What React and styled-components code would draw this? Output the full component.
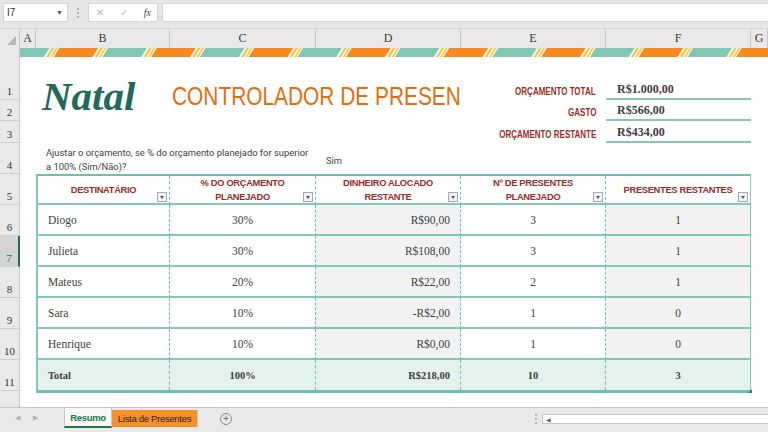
import React from "react";
import styled, { createGlobalStyle } from "styled-components";

const GlobalStyle = createGlobalStyle`
  html, body { margin: 0; padding: 0; }
  body {
    width: 768px;
    height: 432px;
    overflow: hidden;
    background: #e6e6e6;
    font-family: "Liberation Sans", Arial, sans-serif;
  }
`;

const TEAL = "#82c9b7";
const TEAL_DARK = "#6fbfaa";
const RED = "#9b2d1f";
const INK = "#404040";
const SERIF = `"Liberation Serif", "Times New Roman", serif`;

const COLS = [
  { key: "A", w: 16 },
  { key: "B", w: 134 },
  { key: "C", w: 146 },
  { key: "D", w: 145 },
  { key: "E", w: 145 },
  { key: "F", w: 145 },
  { key: "G", w: 17 },
];

const ROWS = [
  { n: 1, h: 52 },
  { n: 2, h: 21 },
  { n: 3, h: 22 },
  { n: 4, h: 31 },
  { n: 5, h: 31 },
  { n: 6, h: 31 },
  { n: 7, h: 31, selected: true },
  { n: 8, h: 31 },
  { n: 9, h: 31 },
  { n: 10, h: 31 },
  { n: 11, h: 31 },
];

const PEOPLE = [
  ["Diogo", "30%", "R$90,00", "3", "1"],
  ["Julieta", "30%", "R$108,00", "3", "1"],
  ["Mateus", "20%", "R$22,00", "2", "1"],
  ["Sara", "10%", "-R$2,00", "1", "0"],
  ["Henrique", "10%", "R$0,00", "1", "0"],
];

const TOTAL = ["Total", "100%", "R$218,00", "10", "3"];

const HEADERS = [
  "DESTINATÁRIO",
  "% DO ORÇAMENTO\nPLANEJADO",
  "DINHEIRO ALOCADO\nRESTANTE",
  "Nº DE PRESENTES\nPLANEJADO",
  "PRESENTES RESTANTES",
];

// column alignment / shading for the table body
const BODY_COLS = [
  { align: "left", shade: false },
  { align: "center", shade: false },
  { align: "right", shade: true },
  { align: "center", shade: false },
  { align: "center", shade: true },
];

const SUMMARY = [
  { label: "ORÇAMENTO TOTAL", value: "R$1.000,00" },
  { label: "GASTO", value: "R$566,00" },
  { label: "ORÇAMENTO RESTANTE", value: "R$434,00" },
];

/* ---------- formula bar ---------- */

const Page = styled.div`
  width: 768px;
  height: 432px;
  display: flex;
  flex-direction: column;
  background: #e6e6e6;
  overflow: hidden;
`;

const FormulaBar = styled.div`
  height: 28px;
  flex-shrink: 0;
  display: flex;
  align-items: center;
  padding: 0 0 3px 3px;
  box-sizing: border-box;
`;

const NameBox = styled.div`
  width: 65px;
  height: 19px;
  box-sizing: border-box;
  background: #fff;
  border: 1px solid #d6d6d6;
  display: flex;
  align-items: center;
  justify-content: space-between;
  padding: 0 4px 0 3px;
  font-size: 10px;
  color: #333;
`;

const Caret = styled.span`
  font-size: 7px;
  color: #555;
`;

const Grip = styled.div`
  width: 20px;
  display: flex;
  flex-direction: column;
  align-items: center;
  gap: 2px;

  span {
    width: 2px;
    height: 2px;
    background: #b4b4b4;
  }
`;

const FxBox = styled.div`
  width: 70px;
  height: 19px;
  box-sizing: border-box;
  background: #fff;
  border: 1px solid #d6d6d6;
  display: flex;
  align-items: center;
  padding: 0 6px 0 7px;
  justify-content: space-between;
`;

const FxIcon = styled.span`
  font-family: ${SERIF};
  font-style: ${(p) => (p.$dim ? "normal" : "italic")};
  font-size: 10px;
  color: ${(p) => (p.$dim ? "#b8b8b8" : "#444")};
`;

const FormulaInput = styled.div`
  flex: 1;
  height: 19px;
  margin-left: 4px;
  box-sizing: border-box;
  background: #fff;
  border: 1px solid #d6d6d6;
  border-right: none;
`;

/* ---------- grid headers ---------- */

const ColHeaderRow = styled.div`
  height: 20px;
  flex-shrink: 0;
  display: flex;
  background: #e9e9e9;
  border-top: 1px solid #d8d8d8;
  box-sizing: border-box;
`;

const Corner = styled.div`
  width: 20px;
  box-sizing: border-box;
  border-right: 1px solid #c8c8c8;
  display: flex;
  align-items: flex-end;
  justify-content: flex-end;
  padding: 0 3px 3px 0;

  &::after {
    content: "";
    width: 0;
    height: 0;
    border-left: 9px solid transparent;
    border-bottom: 9px solid #b9b9b9;
  }
`;

const ColHead = styled.div`
  width: ${(p) => p.$w}px;
  flex-shrink: 0;
  box-sizing: border-box;
  border-right: 1px solid #c8c8c8;
  display: flex;
  align-items: center;
  justify-content: center;
  font-family: ${SERIF};
  font-size: 12px;
  color: #3a3a3a;
`;

const SheetBody = styled.div`
  flex: 1;
  display: flex;
  min-height: 0;
`;

const RowHeaders = styled.div`
  width: 20px;
  flex-shrink: 0;
  display: flex;
  flex-direction: column;
  background: #e9e9e9;
`;

const RowHead = styled.div`
  height: ${(p) => p.$h}px;
  flex-shrink: 0;
  box-sizing: border-box;
  border-bottom: 1px solid #cfcfcf;
  border-right: ${(p) => (p.$selected ? "2px solid #217346" : "1px solid #c8c8c8")};
  background: ${(p) => (p.$selected ? "#d4d4d4" : "#e9e9e9")};
  color: ${(p) => (p.$selected ? "#217346" : "#333")};
  display: flex;
  align-items: flex-end;
  justify-content: center;
  padding-bottom: 2px;
  font-family: ${SERIF};
  font-size: 11px;
  line-height: 12px;
`;

const RowFiller = styled.div`
  flex: 1;
  border-right: 1px solid #c8c8c8;
`;

const Canvas = styled.div`
  flex: 1;
  background: #fff;
  display: flex;
  flex-direction: column;
  overflow: hidden;
`;

/* ---------- decorative band ---------- */

const BandSvg = styled.svg`
  display: block;
  flex-shrink: 0;
`;

const Band = () => (
  <BandSvg width="748" height="9">
    <defs>
      <pattern
        id="xmasStripe"
        width="97.5"
        height="9"
        patternUnits="userSpaceOnUse"
        patternTransform="translate(-9.5 0) skewX(-32)"
      >
        <rect x="0" y="0" width="97.5" height="9" fill="#ffffff" />
        <rect x="0" y="0" width="39" height="9" fill="#80c7b4" />
        <rect x="41.2" y="0" width="2.4" height="9" fill="#f6bd2c" />
        <rect x="45.4" y="0" width="1.8" height="9" fill="#f6bd2c" />
        <rect x="48.75" y="0" width="39" height="9" fill="#f7891f" />
        <rect x="90" y="0" width="2.4" height="9" fill="#f6bd2c" />
        <rect x="94.2" y="0" width="1.8" height="9" fill="#f6bd2c" />
      </pattern>
    </defs>
    <rect x="0" y="0" width="748" height="9" fill="url(#xmasStripe)" />
  </BandSvg>
);

/* ---------- top section ---------- */

const TopGrid = styled.div`
  display: grid;
  grid-template-columns: 16px 134px 146px 145px 145px 145px 1fr;
  grid-template-rows: 43px 21px 22px 31px;
  flex-shrink: 0;
`;

const Brand = styled.div`
  grid-column: 2;
  grid-row: 1 / 3;
  align-self: start;
  margin-top: 19px;
  padding-left: 6px;
  font-family: ${SERIF};
  font-style: italic;
  font-weight: 700;
  font-size: 41px;
  line-height: 41px;
  color: #22695a;
  white-space: nowrap;
`;

const TitleCell = styled.div`
  grid-column: 3 / 5;
  grid-row: 1 / 3;
  overflow: hidden;
  padding-top: 27px;
  padding-left: 2px;
`;

const Title = styled.div`
  display: inline-block;
  white-space: nowrap;
  font-size: 25px;
  line-height: 25px;
  color: #e66d0c;
  transform: scaleX(0.835);
  transform-origin: left center;
`;

const SummaryLabel = styled.div`
  grid-column: 5;
  grid-row: ${(p) => p.$row};
  display: flex;
  align-items: flex-end;
  justify-content: flex-end;
  padding: 0 10px 3px 0;
  white-space: nowrap;
`;

const LabelText = styled.span`
  display: inline-block;
  font-size: 10px;
  font-weight: 700;
  color: ${RED};
  transform: scaleX(0.8);
  transform-origin: right center;
`;

const SummaryValue = styled.div`
  grid-column: 6;
  grid-row: ${(p) => p.$row};
  display: flex;
  align-items: flex-end;
  padding: 0 0 2px 11px;
  border-bottom: 2px solid ${TEAL};
  font-family: ${SERIF};
  font-weight: 700;
  font-size: 12px;
  line-height: 14px;
  color: ${INK};
`;

const Question = styled.div`
  grid-column: 2 / 4;
  grid-row: 4;
  align-self: end;
  padding-left: 10px;
  font-family: Roboto, "Liberation Sans", sans-serif;
  font-size: 9.4px;
  line-height: 14px;
  color: ${INK};
  white-space: nowrap;
`;

const Answer = styled.div`
  grid-column: 4;
  grid-row: 4;
  align-self: center;
  padding: 3px 0 0 10px;
  font-family: Roboto, "Liberation Sans", sans-serif;
  font-size: 9.4px;
  color: ${INK};
`;

/* ---------- table ---------- */

const Table = styled.div`
  margin-left: 16px;
  width: 715px;
  box-sizing: border-box;
  display: grid;
  grid-template-columns: 132px 146px 145px 145px 1fr;
  border-top: 2px solid ${TEAL_DARK};
  border-left: 2px solid ${TEAL};
  border-right: 1px solid ${TEAL};
  border-bottom: 3px solid ${TEAL_DARK};
  position: relative;
`;

const HeadCell = styled.div`
  height: 29px;
  box-sizing: border-box;
  position: relative;
  border-bottom: 2px solid ${TEAL};
  border-right: ${(p) => (p.$last ? "none" : `1px dashed ${TEAL_DARK}`)};
  display: flex;
  align-items: center;
  justify-content: center;
  text-align: center;
  white-space: pre-line;
  font-size: 9.3px;
  font-weight: 700;
  letter-spacing: -0.3px;
  line-height: 14px;
  color: ${RED};
  padding-top: 1px;
`;

const FilterButton = styled.span`
  position: absolute;
  right: 2px;
  bottom: 1px;
  width: 10px;
  height: 10px;
  box-sizing: border-box;
  background: #f3f3f3;
  border: 1px solid #a9a9a9;
  display: flex;
  align-items: center;
  justify-content: center;

  &::after {
    content: "";
    border-left: 2.5px solid transparent;
    border-right: 2.5px solid transparent;
    border-top: 3px solid #555;
  }
`;

const Cell = styled.div`
  height: ${(p) => (p.$total ? 30 : 31)}px;
  box-sizing: border-box;
  border-bottom: ${(p) => (p.$total ? "none" : `2px solid ${TEAL}`)};
  border-right: ${(p) => (p.$last ? "none" : `1px dashed ${TEAL_DARK}`)};
  background: ${(p) => (p.$total ? "#e4f2ee" : p.$shade ? "#f2f2f2" : "#fff")};
  display: flex;
  align-items: center;
  justify-content: ${(p) =>
    p.$align === "left" ? "flex-start" : p.$align === "right" ? "flex-end" : "center"};
  padding: 0 10px;
  font-family: ${SERIF};
  font-size: ${(p) => (p.$total ? "10.5px" : "11.5px")};
  font-weight: ${(p) => (p.$total ? 700 : 400)};
  font-variant-numeric: oldstyle-nums;
  color: ${INK};
  white-space: nowrap;
`;

const ResizeHandle = styled.span`
  position: absolute;
  right: -2px;
  bottom: -3px;
  width: 0;
  height: 0;
  border-left: 4px solid transparent;
  border-bottom: 4px solid #3a6fb0;
`;

/* ---------- sheet tabs ---------- */

const TabBar = styled.div`
  height: 25px;
  flex-shrink: 0;
  box-sizing: border-box;
  border-top: 1px solid #c6c6c6;
  background: #e9e9e9;
  display: flex;
  align-items: flex-start;
`;

const NavArrows = styled.div`
  width: 64px;
  height: 20px;
  display: flex;
  align-items: center;
  gap: 13px;
  padding-left: 15px;
  box-sizing: border-box;
  color: #b0b0b0;
  font-size: 7px;
`;

const SheetTab = styled.div`
  width: ${(p) => p.$w}px;
  height: 19px;
  margin-top: ${(p) => (p.$active ? 0 : 2)}px;
  box-sizing: border-box;
  display: flex;
  align-items: center;
  justify-content: center;
  font-size: 9.5px;
  letter-spacing: -0.3px;
  white-space: nowrap;
  background: ${(p) => p.$color};
  color: ${(p) => (p.$active ? "#217346" : "#262626")};
  font-weight: ${(p) => (p.$active ? 700 : 400)};
  border-bottom: ${(p) => (p.$active ? "2px solid #217346" : "none")};
  border-right: 1px solid #c6c6c6;
  border-left: ${(p) => (p.$active ? "1px solid #c6c6c6" : "none")};
  height: ${(p) => (p.$active ? 20 : 17)}px;
`;

const AddSheet = styled.div`
  width: 10px;
  height: 10px;
  margin: 5px 0 0 22px;
  border: 1px solid #8a8a8a;
  border-radius: 50%;
  display: flex;
  align-items: center;
  justify-content: center;
  color: #707070;
  font-size: 10px;
  line-height: 10px;
`;

const Spacer = styled.div`
  flex: 1;
`;

const ScrollGrip = styled(Grip)`
  width: 12px;
  margin-top: 6px;
`;

const HScroll = styled.div`
  width: 226px;
  height: 10px;
  margin-top: 6px;
  box-sizing: border-box;
  background: #fff;
  border: 1px solid #c6c6c6;
  border-right: none;
  display: flex;
  align-items: center;
  padding-left: 3px;
  font-size: 6px;
  color: #666;
`;

export default function App() {
  return (
    <>
      <GlobalStyle />
      <Page>
        <FormulaBar>
          <NameBox>
            I7
            <Caret>▼</Caret>
          </NameBox>
          <Grip>
            <span />
            <span />
            <span />
          </Grip>
          <FxBox>
            <FxIcon $dim>✕</FxIcon>
            <FxIcon $dim>✓</FxIcon>
            <FxIcon>fx</FxIcon>
          </FxBox>
          <FormulaInput />
        </FormulaBar>

        <ColHeaderRow>
          <Corner />
          {COLS.map((c) => (
            <ColHead key={c.key} $w={c.w}>
              {c.key}
            </ColHead>
          ))}
        </ColHeaderRow>

        <SheetBody>
          <RowHeaders>
            {ROWS.map((r) => (
              <RowHead key={r.n} $h={r.h} $selected={r.selected}>
                {r.n}
              </RowHead>
            ))}
            <RowFiller />
          </RowHeaders>

          <Canvas>
            <Band />
            <TopGrid>
              <Brand>Natal</Brand>
              <TitleCell>
                <Title>CONTROLADOR DE PRESENTES</Title>
              </TitleCell>
              {SUMMARY.map((s, i) => (
                <React.Fragment key={s.label}>
                  <SummaryLabel $row={i + 1}>
                    <LabelText>{s.label}</LabelText>
                  </SummaryLabel>
                  <SummaryValue $row={i + 1}>{s.value}</SummaryValue>
                </React.Fragment>
              ))}
              <Question>
                Ajustar o orçamento, se % do orçamento planejado for superior
                <br />a 100% (Sim/Não)?
              </Question>
              <Answer>Sim</Answer>
            </TopGrid>

            <Table>
              {HEADERS.map((h, i) => (
                <HeadCell key={h} $last={i === HEADERS.length - 1}>
                  {h}
                  <FilterButton />
                </HeadCell>
              ))}
              {PEOPLE.map((row) =>
                row.map((v, i) => (
                  <Cell
                    key={row[0] + i}
                    $align={BODY_COLS[i].align}
                    $shade={BODY_COLS[i].shade}
                    $last={i === row.length - 1}
                  >
                    {v}
                  </Cell>
                ))
              )}
              {TOTAL.map((v, i) => (
                <Cell
                  key={"total" + i}
                  $total
                  $align={BODY_COLS[i].align}
                  $last={i === TOTAL.length - 1}
                >
                  {v}
                </Cell>
              ))}
              <ResizeHandle />
            </Table>
          </Canvas>
        </SheetBody>

        <TabBar>
          <NavArrows>
            <span>◀</span>
            <span>▶</span>
          </NavArrows>
          <SheetTab $active $w={48} $color="#f7f7f7">
            Resumo
          </SheetTab>
          <SheetTab $w={86} $color="#f8902a">
            Lista de Presentes
          </SheetTab>
          <AddSheet>+</AddSheet>
          <Spacer />
          <ScrollGrip>
            <span />
            <span />
            <span />
          </ScrollGrip>
          <HScroll>◀</HScroll>
        </TabBar>
      </Page>
    </>
  );
}
